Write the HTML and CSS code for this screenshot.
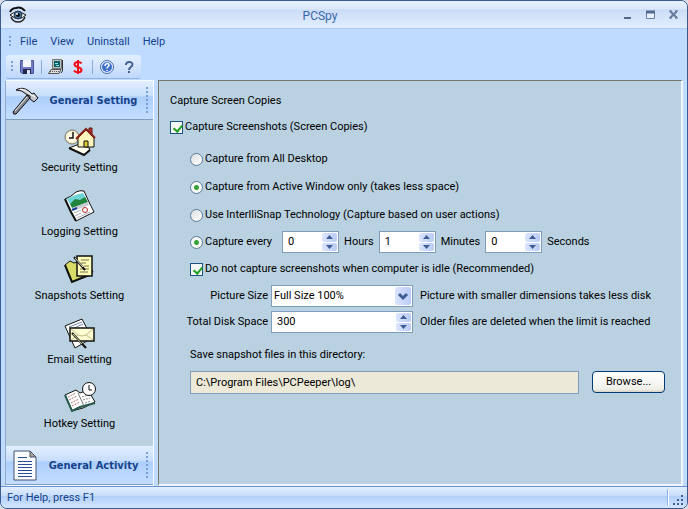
FILE: index.html
```html
<!DOCTYPE html>
<html lang="en">
<head>
    <meta charset="UTF-8">
    <meta name="viewport" content="width=device-width, initial-scale=1.0">
    <title>PCSpy</title>
    <link rel="stylesheet" href="styles.css">
</head>
<body>
    <div class="window">
        <header class="titlebar">
            <svg class="app-icon" width="18" height="18" viewBox="0 0 18 18">
                <path d="M1 6Q3 2 7 2Q12 0 16 5" fill="none" stroke="#111" stroke-width="2"/>
                <path d="M1 9Q8 3 17 9Q10 16 1 9Z" fill="#fff" stroke="#111"/>
                <circle cx="9" cy="9" r="4" fill="#4c719b" stroke="#234"/>
                <circle cx="9" cy="9" r="2" fill="#05080d"/>
                <circle cx="8" cy="8" r="1" fill="#fff"/>
                <path d="M2 11Q4 16 9 16Q14 16 16 11" fill="none" stroke="#222" stroke-width="1.5"/>
            </svg>
            <h1>PCSpy</h1>
            <div class="window-buttons">
                <button type="button" aria-label="Minimize"><svg width="11" height="11"><path d="M2 9H9" stroke="#53698c" stroke-width="2"/></svg></button>
                <button type="button" aria-label="Maximize"><svg width="11" height="11"><path d="M1.500 2.500H9.500V9.500H1.500Z" fill="#e8f1fd" stroke="#6b80a2"/><path d="M1 3H10" stroke="#53698c" stroke-width="3"/></svg></button>
                <button type="button" aria-label="Close"><svg width="11" height="11"><path d="M2 2L9 9M9 2L2 9" stroke="#667a9b" stroke-width="2"/><path d="M1 2H4M7 2H10M1 9H4M7 9H10" stroke="#667a9b"/></svg></button>
            </div>
        </header>

        <nav class="menubar">
            <span class="grip"></span>
            <a href="#">File</a>
            <a href="#">View</a>
            <a href="#">Uninstall</a>
            <a href="#">Help</a>
        </nav>

        <div class="toolbar">
            <span class="grip"></span>
            <button type="button" aria-label="Save">
                <svg width="16" height="16">
                    <path d="M1.500 1.500H14.500V14.500H3L1.500 13Z" fill="#6f7bc4" stroke="#4a549d"/>
                    <path d="M4 1H12V8H4Z" fill="#f4f6ff"/>
                    <path d="M4 10H12V15H4Z" fill="#20264d"/>
                    <path d="M8 11H11V15H8Z" fill="#dce2ff"/>
                </svg>
            </button>
            <span class="divider"></span>
            <button type="button" aria-label="Computer">
                <svg width="16" height="16">
                    <path d="M4.500 0.500H13.500V9.500H4.500Z" fill="#b9c2c0" stroke="#777"/>
                    <path d="M6 2H12V8H6Z" fill="#075f66"/>
                    <path d="M7 4.500H10M8 6.500H11" stroke="#8de7e2"/>
                    <path d="M14.500 1V12L13 14" fill="none" stroke="#333"/>
                    <path d="M3 10.500H13L11 14.500H0.500Z" fill="#ddd" stroke="#555"/>
                    <path d="M2 12.500H11" stroke="#555" stroke-dasharray="1 1"/>
                </svg>
            </button>
            <button type="button" aria-label="Register">
                <svg width="16" height="16">
                    <path d="M11.500 4.500C10 2 4.500 2.500 4.500 5.500C4.500 8.500 11.500 7.500 11.500 11C11.500 14 5.500 14 4 11.500M8 1V15" fill="none" stroke="#ef1018" stroke-width="2"/>
                </svg>
            </button>
            <span class="divider"></span>
            <button type="button" aria-label="Help contents">
                <svg width="16" height="16">
                    <circle cx="8" cy="8" r="6.500" fill="#edf4ff" stroke="#3f66b0"/>
                    <circle cx="8" cy="8" r="5" fill="#3d6fc8"/>
                    <path d="M6 7C6 4 10 4 10 6C10 8 8 7.500 8 9.500M8 11V12" fill="none" stroke="#fff" stroke-width="1.500"/>
                </svg>
            </button>
            <button type="button" aria-label="About">
                <svg width="16" height="16">
                    <path d="M5 6C4.500 2 11.500 2 11.500 5.500C11.500 8 8 8 8 11M8 12V14" fill="none" stroke="#455f91" stroke-width="2"/>
                </svg>
            </button>
        </div>

        <div class="workspace">
            <aside class="sidebar">
                <button type="button" class="section">
                    <svg width="32" height="32" viewBox="0 0 32 32">
                        <path d="M4 27L18 10L21 13L7 29Q4 30 4 27Z" fill="#85898e" stroke="#111"/>
                        <path d="M6 26L18 12" stroke="#e8edf0"/>
                        <path d="M7 5Q13 1 20 6L23 9L25 8L29 13L25 17L21 14L21 11L17 9Q13 5 7 5Z" fill="#c3c9ce" stroke="#111"/>
                        <path d="M11 4Q17 4 21 9L26 12" fill="none" stroke="#fff"/>
                    </svg>
                    <span>General Setting</span>
                    <span class="grip tall"></span>
                </button>
                <div class="shortcuts">
                    <a href="#" class="shortcut">
                        <svg width="32" height="32" viewBox="0 0 32 32">
                            <path d="M5 22L18 17L26 23L20 29Z" fill="#fffef0" stroke="#111"/>
                            <path d="M5 22L20 29L26 24" fill="none" stroke="#111" stroke-width="2"/>
                            <circle cx="8" cy="11" r="7" fill="#f3ecc7" stroke="#777"/>
                            <circle cx="8" cy="11" r="5" fill="#fffce7"/>
                            <path d="M9 6V12H5" fill="none" stroke="#111" stroke-width="1.500"/>
                            <path d="M25 8V2H28V11" fill="#b73535" stroke="#651010"/>
                            <path d="M14 12L22 4L30 12V21H14Z" fill="#fff7be" stroke="#111"/>
                            <path d="M12 13L22 3L31 12" fill="none" stroke="#8b1f16" stroke-width="2"/>
                            <path d="M20 15H24V21H20Z" fill="#e1c835" stroke="#111"/>
                        </svg>
                        Security Setting
                    </a>
                    <a href="#" class="shortcut">
                        <svg width="32" height="32" viewBox="0 0 32 32">
                            <path d="M1 9Q7 7 12 2Q16 0 20 1L25 12L30 22L12 31L7 22Z" fill="#fff" stroke="#111"/>
                            <path d="M3 9Q12 4 19 3L22 8L6 14Z" fill="#6ed4d5"/>
                            <path d="M6 14L11 9L16 10L21 7L24 12L8 18Z" fill="#20843d"/>
                            <path d="M8 18L24 12L25 15L9 21Z" fill="#c5ccd5"/>
                            <path d="M8 20L13 18" stroke="#173f9d" stroke-width="2"/>
                            <path d="M10 23L17 20M11 26L17 23M13 28L26 22" stroke="#aaa9b5"/>
                            <circle cx="21" cy="20" r="2.500" fill="#fff" stroke="#b72525"/>
                            <path d="M1 9L7 22L12 31" fill="none" stroke="#111" stroke-width="2"/>
                        </svg>
                        Logging Setting
                    </a>
                    <a href="#" class="shortcut">
                        <svg width="32" height="32" viewBox="0 0 32 32">
                            <path d="M1 11L6 7L10 9L17 7L29 17L27 21L8 28L5 22Z" fill="#d9dc67" stroke="#111"/>
                            <path d="M1 11L8 28L27 20" fill="none" stroke="#111" stroke-width="2"/>
                            <path d="M13 2H28V22H13Z" fill="#ffffb9" stroke="#111" stroke-width="1.500"/>
                            <path d="M17 6H25M17 9H22M20 12H25M16 15H25M16 18H24" stroke="#777243"/>
                            <path d="M10 3L21 16" stroke="#111" stroke-width="2"/>
                            <path d="M11 4L19 13" stroke="#e6e7cd"/>
                        </svg>
                        Snapshots Setting
                    </a>
                    <a href="#" class="shortcut">
                        <svg width="32" height="32" viewBox="0 0 32 32">
                            <path d="M1 8L18 1L28 20L11 30Z" fill="#fff" stroke="#111"/>
                            <path d="M5 9L18 4M6 12L19 6" stroke="#7480b0"/>
                            <path d="M6 10H30V23H6Z" fill="#fffdd2" stroke="#111" stroke-width="1.500"/>
                            <path d="M7 11L14 17Q18 19 22 17L29 11M7 22L14 17M29 22L22 17" fill="none" stroke="#c2ba8c"/>
                            <path d="M8 15L22 30" stroke="#111" stroke-width="2"/>
                            <path d="M9 16L18 26" stroke="#d7d49f"/>
                        </svg>
                        Email Setting
                    </a>
                    <a href="#" class="shortcut">
                        <svg width="32" height="32" viewBox="0 0 32 32">
                            <path d="M1 13L12 8L16 11L24 8L31 20L19 26L8 29Z" fill="#fff" stroke="#111"/>
                            <path d="M1 13L8 29L16 25L31 21" fill="none" stroke="#24594c" stroke-width="2"/>
                            <path d="M14 11L20 24" stroke="#777"/>
                            <path d="M4 15L12 11M5 18L13 14M7 21L15 17M8 24L16 20" stroke="#b47874" stroke-dasharray="2 1"/>
                            <path d="M18 15L24 13M19 18L26 16M21 21L27 19" stroke="#8a8c90" stroke-dasharray="2 1"/>
                            <circle cx="25" cy="7" r="6.500" fill="#fff" stroke="#111"/>
                            <path d="M25 3V8H28" fill="none" stroke="#111"/>
                        </svg>
                        Hotkey Setting
                    </a>
                </div>
                <button type="button" class="section">
                    <svg width="32" height="32" viewBox="0 0 32 32">
                        <path d="M5 1H21L27 7V30H5Z" fill="#fafcff" stroke="#45536d"/>
                        <path d="M21 1V7H27Z" fill="#b1a392" stroke="#45536d"/>
                        <path d="M9 7.500H18M9 11.500H23M9 14.500H23M9 17.500H23M9 20.500H23M9 23.500H23M9 26.500H23" stroke="#294e91"/>
                    </svg>
                    <span>General Activity</span>
                    <span class="grip tall"></span>
                </button>
            </aside>

            <main class="panel">
                <form class="settings">
                    <h2>Capture Screen Copies</h2>
                    <label class="option"><input type="checkbox" checked>Capture Screenshots (Screen Copies)</label>

                    <div class="capture">
                        <div class="modes">
                            <label class="option"><input type="radio" name="mode">Capture from All Desktop</label>
                            <label class="option"><input type="radio" name="mode" checked>Capture from Active Window only (takes less space)</label>
                            <label class="option"><input type="radio" name="mode">Use InterlliSnap Technology (Capture based on user actions)</label>
                        </div>

                        <div class="interval">
                            <label class="option"><input type="radio" name="timer" checked>Capture every</label>
                            <span class="spinner">
                                <input type="text" id="hours" value="0">
                                <span class="arrows">
                                    <button type="button" aria-label="More hours"><svg width="7" height="4"><path d="M0 4L3.500 0L7 4Z"/></svg></button>
                                    <button type="button" aria-label="Fewer hours"><svg width="7" height="4"><path d="M0 0L3.500 4L7 0Z"/></svg></button>
                                </span>
                            </span>
                            <label for="hours">Hours</label>
                            <span class="spinner">
                                <input type="text" id="minutes" value="1">
                                <span class="arrows">
                                    <button type="button" aria-label="More minutes"><svg width="7" height="4"><path d="M0 4L3.500 0L7 4Z"/></svg></button>
                                    <button type="button" aria-label="Fewer minutes"><svg width="7" height="4"><path d="M0 0L3.500 4L7 0Z"/></svg></button>
                                </span>
                            </span>
                            <label for="minutes">Minutes</label>
                            <span class="spinner">
                                <input type="text" id="seconds" value="0">
                                <span class="arrows">
                                    <button type="button" aria-label="More seconds"><svg width="7" height="4"><path d="M0 4L3.500 0L7 4Z"/></svg></button>
                                    <button type="button" aria-label="Fewer seconds"><svg width="7" height="4"><path d="M0 0L3.500 4L7 0Z"/></svg></button>
                                </span>
                            </span>
                            <label for="seconds">Seconds</label>
                        </div>

                        <label class="option"><input type="checkbox" checked>Do not capture screenshots when computer is idle (Recommended)</label>

                        <div class="fields">
                            <label for="size">Picture Size</label>
                            <span class="dropdown">
                                <select id="size"><option>Full Size 100%</option></select>
                                <svg class="chevron" width="16" height="18"><path d="M4 7L8 11L12 7" fill="none" stroke="#405c92" stroke-width="3"/></svg>
                            </span>
                            <span class="note">Picture with smaller dimensions takes less disk</span>
                            <label for="space">Total Disk Space</label>
                            <span class="spinner wide">
                                <input type="text" id="space" value="300">
                                <span class="arrows">
                                    <button type="button" aria-label="More space"><svg width="7" height="4"><path d="M0 4L3.500 0L7 4Z"/></svg></button>
                                    <button type="button" aria-label="Less space"><svg width="7" height="4"><path d="M0 0L3.500 4L7 0Z"/></svg></button>
                                </span>
                            </span>
                            <span class="note">Older files are deleted when the limit is reached</span>
                        </div>

                        <label for="directory" class="directory-label">Save snapshot files in this directory:</label>
                        <div class="directory">
                            <input type="text" id="directory" value="C:\Program Files\PCPeeper\log\" readonly>
                            <button type="button" class="browse">Browse...</button>
                        </div>
                    </div>
                </form>
            </main>
        </div>

        <footer class="statusbar">
            <span>For Help, press F1</span>
            <svg class="resize" width="20" height="18">
                <path d="M0.500 0V16" stroke="#8fb2e4"/>
                <path d="M1.500 0V16" stroke="#fff"/>
                <path d="M14 6h2v2h-2zM10 10h2v2h-2zM14 10h2v2h-2zM6 14h2v2h-2zM10 14h2v2h-2zM14 14h2v2h-2z" fill="#456293"/>
            </svg>
        </footer>
    </div>
</body>
</html>
```

FILE: styles.css
```css
* {
    box-sizing: border-box;
}

body {
    margin: 0;
    font-family: Tahoma, Roboto, 'DejaVu Sans', sans-serif;
    font-size: 11px;
    line-height: 16px;
    color: #000;
    background: #d9dde4;
}

button, input, select {
    font: inherit;
    color: inherit;
    margin: 0;
}

button {
    padding: 0;
    border: none;
    background: none;
}

a {
    color: inherit;
    text-decoration: none;
}

svg {
    display: block;
    flex: none;
}

.window {
    display: flex;
    flex-direction: column;
    min-height: 100vh;
    border: 1px solid #3b5a8f;
    border-radius: 7px;
    background: #bfdbff;
    overflow: hidden;
}

.titlebar {
    display: grid;
    grid-template-columns: 1fr auto 1fr;
    align-items: center;
    height: 28px;
    padding: 0 8px;
    border-bottom: 1px solid #aecbf0;
    background: linear-gradient(#e8f1fe 0, #dbe8fb 30%, #cadcf6 32%, #e2eeff 100%);
}

.titlebar h1 {
    margin: 0;
    padding: 2px 48px 0 0;
    font-size: 12px;
    font-weight: normal;
    color: #3b66a9;
}

.window-buttons {
    display: flex;
    justify-content: flex-end;
    gap: 12px;
}

.menubar {
    display: flex;
    align-items: center;
    gap: 13px;
    height: 26px;
    padding-left: 8px;
    color: #15428b;
}

.menubar .grip {
    margin-right: -4px;
}

.grip {
    flex: none;
    width: 2px;
    height: 12px;
    background: repeating-linear-gradient(#799fd7 0 2px, transparent 2px 4px);
}

.grip.tall {
    height: 28px;
}

.toolbar {
    display: flex;
    align-items: center;
    align-self: flex-start;
    gap: 6px;
    height: 24px;
    padding: 0 4px 0 5px;
    margin-left: 5px;
    border-bottom: 1px solid #8fb3e7;
    border-radius: 3px;
    background: linear-gradient(#e3efff, #d3e4fc 50%, #bfd8fb);
}

.divider {
    width: 1px;
    height: 14px;
    background: #8badde;
}

.workspace {
    display: flex;
    flex: 1;
    gap: 4px;
    padding: 1px 4px 0;
}

.sidebar {
    display: flex;
    flex-direction: column;
    width: 149px;
    flex: none;
    border: 1px solid #f5faff;
    border-left-color: #91abc7;
    background: #b9d1e0;
}

.section {
    display: flex;
    align-items: center;
    justify-content: space-between;
    height: 39px;
    padding: 2px 5px 0 3px;
    border-bottom: 1px solid #7f9dbb;
    background: linear-gradient(#e3efff 0, #c8defc 38%, #adcffc 42%, #c4ddff 100%);
    color: #15428b;
    font-family: Tahoma, 'DejaVu Sans Condensed', 'DejaVu Sans', sans-serif;
    font-weight: bold;
}

.shortcuts {
    display: flex;
    flex-direction: column;
    flex: 1;
    gap: 14px;
    padding-top: 6px;
}

.shortcut {
    display: flex;
    flex-direction: column;
    align-items: center;
    gap: 2px;
}

.panel {
    flex: 1;
    min-width: 0;
    border: 1px solid #75776c;
    border-right: 2px solid #f0f6fb;
    border-bottom: 2px solid #f0f6fb;
    background: #b9d1e0;
    padding: 12px 16px 10px 11px;
}

.settings h2 {
    margin: 0 0 10px;
    font-size: 11px;
    font-weight: normal;
}

.option {
    display: flex;
    align-items: center;
    gap: 2px;
    white-space: nowrap;
}

.option input {
    appearance: none;
    flex: none;
    width: 13px;
    height: 13px;
    border: 1px solid #1c5180;
    background: #f5f7f5;
}

.option input[type="radio"] {
    border-radius: 50%;
    border-color: #5f7d9b;
    background: linear-gradient(135deg, #dddfe0, #fff);
}

.option input[type="radio"]:checked {
    background: radial-gradient(circle, #36a136 0 2px, #f6f8f6 3px);
}

.option input[type="checkbox"]:checked::before {
    content: '';
    display: block;
    width: 4px;
    height: 7px;
    margin: 1px 0 0 4px;
    border: solid #21a121;
    border-width: 0 2px 2px 0;
    transform: rotate(40deg);
}

.capture {
    display: flex;
    flex-direction: column;
    gap: 8px;
    padding: 16px 0 0 20px;
}

.modes {
    display: flex;
    flex-direction: column;
    gap: 12px;
}

.interval {
    display: flex;
    align-items: center;
    gap: 5px;
}

.interval .option {
    margin-right: 5px;
}

.spinner {
    display: flex;
    flex: none;
    width: 57px;
    height: 22px;
    padding: 1px;
    border: 1px solid #7f9db9;
    background: #fff;
}

.spinner input {
    flex: 1;
    width: 0;
    padding: 0 0 0 4px;
    border: none;
    background: none;
}

.spinner.wide {
    width: 142px;
}

.arrows {
    display: grid;
    gap: 1px;
    width: 15px;
}

.arrows button {
    display: flex;
    align-items: center;
    justify-content: center;
    border-radius: 2px;
    background: linear-gradient(90deg, #dbe5fe, #b9cbf6);
}

.arrows path {
    fill: #405c92;
}

.fields {
    display: grid;
    grid-template-columns: 78px 142px 1fr;
    align-items: center;
    column-gap: 3px;
    row-gap: 4px;
    white-space: nowrap;
}

.fields label {
    justify-self: end;
}

.note {
    padding-left: 4px;
}

.dropdown {
    display: grid;
    align-items: center;
    height: 22px;
    border: 1px solid #7f9db9;
    background: #fff;
}

.dropdown select,
.dropdown .chevron {
    grid-area: 1 / 1;
}

.dropdown select {
    appearance: none;
    width: 100%;
    height: 20px;
    padding: 0 18px 0 2px;
    border: none;
    background: none;
}

.chevron {
    justify-self: end;
    margin-right: 1px;
    border-radius: 2px;
    background: linear-gradient(90deg, #dbe5fe, #b9cbf6);
    pointer-events: none;
}

.directory-label {
    padding-top: 6px;
}

.directory {
    display: flex;
    gap: 13px;
}

.directory input {
    flex: 1;
    min-width: 0;
    height: 23px;
    padding: 0 5px;
    border: 1px solid #7f9db9;
    background: #ece9d8;
}

.browse {
    width: 73px;
    height: 22px;
    border: 1px solid #003c74;
    border-radius: 4px;
    background: linear-gradient(#fff, #f0f0ea 85%, #d8d2c8);
}

.statusbar {
    display: flex;
    align-items: center;
    justify-content: space-between;
    height: 22px;
    padding: 0 0 0 6px;
    border-top: 1px solid #6593cf;
    background: linear-gradient(#e3efff 0, #c8defb 40%, #b2d0f8 44%, #d2e5ff 100%);
    color: #15428b;
}
```
